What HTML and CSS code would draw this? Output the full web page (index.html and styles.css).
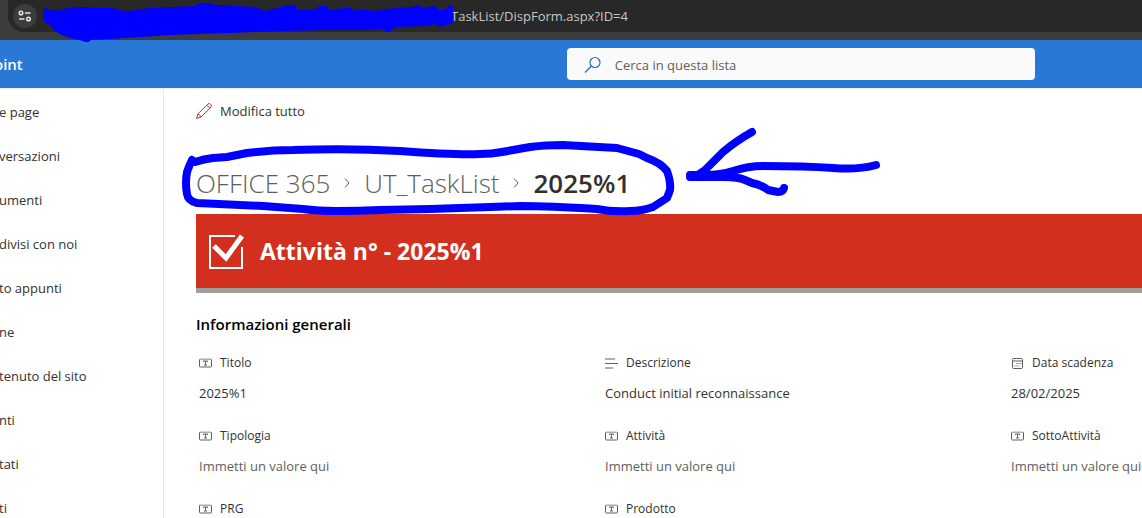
FILE: index.html
```html
<!DOCTYPE html>
<html lang="it">
<head>
<meta charset="utf-8">
<title>2025%1</title>
<link rel="stylesheet" href="styles.css">
</head>
<body>
<div class="browser-bar">
  <div class="address">
    <button class="site-info" aria-label="Informazioni sul sito">
      <svg width="14" height="12" viewBox="0 0 14 12" fill="none" stroke="#e3e3e3" stroke-width="1.5"><circle cx="3" cy="3" r="1.8"/><path d="M7 3h5.500M1 9h5.500"/><circle cx="10.500" cy="9" r="1.800"/></svg>
    </button>
    <input class="address-text" aria-label="Indirizzo" value="TaskList/DispForm.aspx?ID=4" readonly>
  </div>
</div>
<header class="suite">
  <a class="brand" href="#">oint</a>
  <label class="search">
    <svg width="18" height="18" viewBox="0 0 18 18" fill="none" stroke="#2b6cb8" stroke-width="1.200"><circle cx="11" cy="6.500" r="5"/><path d="M7.500 10L1 16.500"/></svg>
    <input type="search" placeholder="Cerca in questa lista" aria-label="Cerca in questa lista">
  </label>
</header>
<div class="body">
  <nav class="side">
    <a href="#">e page</a>
    <a href="#">versazioni</a>
    <a href="#">umenti</a>
    <a href="#">divisi con noi</a>
    <a href="#">to appunti</a>
    <a href="#">ne</a>
    <a href="#">tenuto del sito</a>
    <a href="#">nti</a>
    <a href="#">tati</a>
    <a href="#">ti</a>
  </nav>
  <main class="content">
    <button class="edit">
      <svg width="16" height="16" viewBox="0 0 16 16" fill="none" stroke="#c8302c" stroke-width="1"><path d="M.600 15.400L1.800 11 12 .900Q13.300 0 14.600 1.300 16 2.700 15 4L4.800 14.200zM10.800 2.200l3 3M1.800 11.200Q4.200 11.600 4.700 14.100"/></svg>
      Modifica tutto
    </button>
    <div class="crumbs">
      <a href="#">OFFICE 365</a>
      <svg width="6" height="10" viewBox="0 0 6 10" fill="none" stroke="#605e5c"><path d="M1 .500L5 5 1 9.500"/></svg>
      <a href="#">UT_TaskList</a>
      <svg width="6" height="10" viewBox="0 0 6 10" fill="none" stroke="#605e5c"><path d="M1 .500L5 5 1 9.500"/></svg>
      <strong>2025%1</strong>
    </div>
    <div class="banner">
      <svg width="36" height="38" viewBox="0 0 36 38" fill="none" stroke="#fff"><path stroke-width="2" d="M27 4H2v32h32V15"/><path stroke-width="5" d="M6 14l12 12L34 4"/></svg>
      <h1>Attività n° - 2025%1</h1>
    </div>
    <h2>Informazioni generali</h2>
    <dl class="fields">
      <div class="field"><dt><svg class="ico" viewBox="0 0 13 10"><use href="#text-icon"/></svg>Titolo</dt><dd>2025%1</dd></div>
      <div class="field"><dt><svg class="ico" viewBox="0 0 13 10" fill="none" stroke="#605e5c"><path d="M0 .500h10M0 5h13M0 9.500h8"/></svg>Descrizione</dt><dd>Conduct initial reconnaissance</dd></div>
      <div class="field"><dt><svg class="ico" viewBox="0 0 13 11" fill="none" stroke="#605e5c"><rect x="1.500" y=".500" width="10" height="10" rx="1"/><path d="M1.500 3h10M5.500 5.500h1M7.500 5.500h1M9.500 5.500h1M3.500 8h1M5.500 8h1M7.500 8h1"/></svg>Data scadenza</dt><dd>28/02/2025</dd></div>
      <div class="field"><dt><svg class="ico" viewBox="0 0 13 10"><use href="#text-icon"/></svg>Tipologia</dt><dd class="empty">Immetti un valore qui</dd></div>
      <div class="field"><dt><svg class="ico" viewBox="0 0 13 10"><use href="#text-icon"/></svg>Attività</dt><dd class="empty">Immetti un valore qui</dd></div>
      <div class="field"><dt><svg class="ico" viewBox="0 0 13 10"><use href="#text-icon"/></svg>SottoAttività</dt><dd class="empty">Immetti un valore qui</dd></div>
      <div class="field"><dt><svg class="ico" viewBox="0 0 13 10"><use href="#text-icon"/></svg>PRG</dt></div>
      <div class="field"><dt><svg class="ico" viewBox="0 0 13 10"><use href="#text-icon"/></svg>Prodotto</dt></div>
    </dl>
  </main>
</div>
<svg class="defs" width="0" height="0"><symbol id="text-icon" viewBox="0 0 13 10"><g fill="none" stroke="#605e5c"><rect x=".500" y=".500" width="12" height="8" rx="1"/><path d="M4.500 3.500v-1h4v1M6.500 2.500v4M5 6.500h3"/></g></symbol></svg>
<svg class="ink" width="900" height="230" viewBox="0 0 900 230" aria-hidden="true">
  <path class="ink-fill" d="M43 10Q46 6 50 11L53 9 58 11 68 8 80 7 100 8 113 8 118 10 128 11 150 8 195 6Q198 3 203 3H211L216 5 255 7 265 11 280 7 288 5Q297 4 298 10L315 9 320 6Q328 5 329 10L345 8Q353 7 354 11L362 9 374 11 395 8 413 7Q418 3 423 8L430 7Q434 4 438 10L446 10Q447 5 450 5 453 5 453 9V22Q452 25 445 25 440 29 436 24L425 26 395 27Q390 33 386 32L383 29 365 30 330 30 280 31 200 34 170 35 110 39 91 40Q88 44 83 41L70 38Q57 34 53 29L49 24Q43 22 43 18Z"/>
  <path class="ink-line" d="M192 160L195 162Q204 159 213 158L227 157Q237 155 247 153 270 150 293 150 350 148 400 151 455 155 480 154 492 154 502 152L530 147Q545 145 563 145L617 148 639 154 647 158Q661 163 667 171 671 182 670 190L667 198 653 207Q642 211 630 211 612 212 597 209 550 206 520 206L490 207 430 209 380 210Q358 211 337 211 318 211 303 209L263 206 197 203Q188 201 187 194 185 183 187 172Q189 166 192 160"/>
  <path class="ink-arrow" d="M752 132Q736 141 723 152L712 163Q706 170 698 175H690Q718 176 733 171 748 166 763 166 805 166 833 168 858 170 876 165M690 177H725Q738 177 745 180L752 183Q762 185 768 190L778 192Q783 192 784 188"/>
</svg>
</body>
</html>
```

FILE: styles.css
```css
* { box-sizing: border-box; }
body {
  margin: 0;
  min-height: 100vh;
  position: relative;
  overflow: hidden;
  background: #fff;
  color: #323130;
  font: 13px/20px "Open Sans", "Noto Sans", sans-serif;
}
a { color: inherit; text-decoration: none; }
button, input { font: inherit; color: inherit; border: 0; padding: 0; background: none; outline: 0; }
svg { flex: none; }
.browser-bar { height: 40px; padding-left: 8px; background: #3c3c3c; }
.address { display: flex; align-items: center; height: 32px; padding-left: 5px; background: #282828; border-radius: 0 0 0 16px; }
.site-info { display: grid; place-items: center; width: 24px; height: 24px; border-radius: 50%; background: #3c3c3c; }
.address-text { flex: 1; min-width: 0; padding-left: 414px; color: #c7c7c7; }
.suite { display: flex; align-items: center; height: 48px; background: #2a78d5; }
.brand { flex: 1; margin-left: -6px; color: #fff; font-size: 15px; font-weight: 600; }
.search { display: flex; align-items: center; gap: 13px; width: 41%; height: 32px; margin-right: 107px; padding: 1px 17px 0; border-radius: 4px; background: #fafafa; }
.search input { flex: 1; min-width: 0; }
.search input::placeholder { color: #605e5c; opacity: 1; }
.body { display: flex; height: calc(100vh - 88px); border-top: 1px solid #f0f0f0; }
.side { flex: 0 0 164px; overflow: hidden; padding-top: 1px; border-right: 1px solid #e6e6e6; }
.side a { display: block; height: 44px; margin-left: -1px; line-height: 44px; white-space: nowrap; }
.content { flex: 1; min-width: 0; overflow: hidden; padding: 12px 0 0 32px; }
.edit { display: flex; align-items: center; gap: 8px; height: 20px; }
.crumbs { display: flex; align-items: center; gap: 14px; height: 36px; margin: 44px 0 13px; font-size: 26px; font-weight: 300; color: #605e5c; white-space: nowrap; }
.crumbs strong { font-weight: 600; color: #323130; }
.banner { display: flex; align-items: center; gap: 16px; height: 79px; padding: 0 12px; background: #d32f1e; border-bottom: 5px solid #a19f9d; color: #fff; }
h1 { margin: 0; font-size: 23px; font-weight: 700; line-height: 32px; }
h2 { margin: 21px 0 19px; font-size: 15px; line-height: 20px; font-weight: 600; color: #000; }
.fields { display: grid; grid-template-columns: repeat(3, minmax(406px, 1fr)); margin: 0; }
.field { height: 73px; padding-left: 3px; }
dt { display: flex; align-items: center; gap: 8px; height: 20px; font-size: 12px; }
dd { margin: 10px 0 0; }
.empty { color: #605e5c; }
.ico { width: 13px; height: 11px; }
.defs { display: block; position: absolute; }
.ink { position: absolute; top: 0; left: 0; pointer-events: none; }
.ink-fill { fill: #00f; }
.ink-line, .ink-arrow { fill: none; stroke: #00f; stroke-width: 8px; stroke-linecap: round; stroke-linejoin: round; }
```
